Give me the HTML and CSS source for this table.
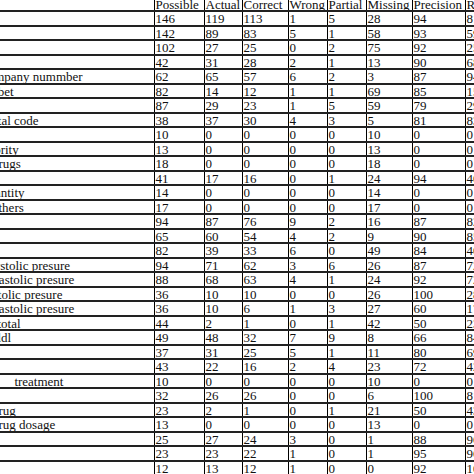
FILE: index.html
```html
<!DOCTYPE html>
<html lang="en">
<head>
<meta charset="utf-8">
<title>Extraction results</title>
<link rel="stylesheet" href="styles.css">
</head>
<body>
<table class="results">
  <colgroup>
    <col class="c-label"><col class="c-possible"><col class="c-actual"><col class="c-correct"><col class="c-wrong"><col class="c-partial"><col class="c-missing"><col class="c-precision"><col class="c-recall">
  </colgroup>
  <thead>
    <tr><th></th><th>Possible</th><th>Actual</th><th>Correct</th><th>Wrong</th><th>Partial</th><th>Missing</th><th>Precision</th><th>Recall</th></tr>
  </thead>
  <tbody>
    <tr><td>ID</td><td>146</td><td>119</td><td>113</td><td>1</td><td>5</td><td>28</td><td>94</td><td>81</td></tr>
    <tr><td>Sex</td><td>142</td><td>89</td><td>83</td><td>5</td><td>1</td><td>58</td><td>93</td><td>59</td></tr>
    <tr><td>Tel</td><td>102</td><td>27</td><td>25</td><td>0</td><td>2</td><td>75</td><td>92</td><td>25</td></tr>
    <tr><td>Fax</td><td>42</td><td>31</td><td>28</td><td>2</td><td>1</td><td>13</td><td>90</td><td>68</td></tr>
    <tr><td>Company nummber</td><td>62</td><td>65</td><td>57</td><td>6</td><td>2</td><td>3</td><td>87</td><td>94</td></tr>
    <tr><td>Diabet</td><td>82</td><td>14</td><td>12</td><td>1</td><td>1</td><td>69</td><td>85</td><td>15</td></tr>
    <tr><td>Nr</td><td>87</td><td>29</td><td>23</td><td>1</td><td>5</td><td>59</td><td>79</td><td>29</td></tr>
    <tr><td>Postal code</td><td>38</td><td>37</td><td>30</td><td>4</td><td>3</td><td>5</td><td>81</td><td>83</td></tr>
    <tr><td>Tax</td><td>10</td><td>0</td><td>0</td><td>0</td><td>0</td><td>10</td><td>0</td><td>0</td></tr>
    <tr><td>Priority</td><td>13</td><td>0</td><td>0</td><td>0</td><td>0</td><td>13</td><td>0</td><td>0</td></tr>
    <tr><td>1. drugs</td><td>18</td><td>0</td><td>0</td><td>0</td><td>0</td><td>18</td><td>0</td><td>0</td></tr>
    <tr><td>Dx</td><td>41</td><td>17</td><td>16</td><td>0</td><td>1</td><td>24</td><td>94</td><td>40</td></tr>
    <tr><td>Quantity</td><td>14</td><td>0</td><td>0</td><td>0</td><td>0</td><td>14</td><td>0</td><td>0</td></tr>
    <tr><td>Brothers</td><td>17</td><td>0</td><td>0</td><td>0</td><td>0</td><td>17</td><td>0</td><td>0</td></tr>
    <tr><td>Hb</td><td>94</td><td>87</td><td>76</td><td>9</td><td>2</td><td>16</td><td>87</td><td>82</td></tr>
    <tr><td>HR</td><td>65</td><td>60</td><td>54</td><td>4</td><td>2</td><td>9</td><td>90</td><td>85</td></tr>
    <tr><td>Wt</td><td>82</td><td>39</td><td>33</td><td>6</td><td>0</td><td>49</td><td>84</td><td>40</td></tr>
    <tr><td>1 systolic presure</td><td>94</td><td>71</td><td>62</td><td>3</td><td>6</td><td>26</td><td>87</td><td>72</td></tr>
    <tr><td>1 diastolic presure</td><td>88</td><td>68</td><td>63</td><td>4</td><td>1</td><td>24</td><td>92</td><td>72</td></tr>
    <tr><td>Systolic presure</td><td>36</td><td>10</td><td>10</td><td>0</td><td>0</td><td>26</td><td>100</td><td>28</td></tr>
    <tr><td>2 diastolic presure</td><td>36</td><td>10</td><td>6</td><td>1</td><td>3</td><td>27</td><td>60</td><td>17</td></tr>
    <tr><td>Ch total</td><td>44</td><td>2</td><td>1</td><td>0</td><td>1</td><td>42</td><td>50</td><td>23</td></tr>
    <tr><td>Ch ldl</td><td>49</td><td>48</td><td>32</td><td>7</td><td>9</td><td>8</td><td>66</td><td>84</td></tr>
    <tr><td>TG</td><td>37</td><td>31</td><td>25</td><td>5</td><td>1</td><td>11</td><td>80</td><td>69</td></tr>
    <tr><td>Glu</td><td>43</td><td>22</td><td>16</td><td>2</td><td>4</td><td>23</td><td>72</td><td>42</td></tr>
    <tr><td>No&emsp;&ensp;treatment</td><td>10</td><td>0</td><td>0</td><td>0</td><td>0</td><td>10</td><td>0</td><td>0</td></tr>
    <tr><td>Hb</td><td>32</td><td>26</td><td>26</td><td>0</td><td>0</td><td>6</td><td>100</td><td>81</td></tr>
    <tr><td>1. drug</td><td>23</td><td>2</td><td>1</td><td>0</td><td>1</td><td>21</td><td>50</td><td>43</td></tr>
    <tr><td>1. drug dosage</td><td>13</td><td>0</td><td>0</td><td>0</td><td>0</td><td>13</td><td>0</td><td>0</td></tr>
    <tr><td>Ht</td><td>25</td><td>27</td><td>24</td><td>3</td><td>0</td><td>1</td><td>88</td><td>96</td></tr>
    <tr><td>Ht</td><td>23</td><td>23</td><td>22</td><td>1</td><td>0</td><td>1</td><td>95</td><td>96</td></tr>
    <tr><td>Ht</td><td>12</td><td>13</td><td>12</td><td>1</td><td>0</td><td>0</td><td>92</td><td>100</td></tr>
  </tbody>
</table>
</body>
</html>
```
FILE: styles.css
```css
html, body {
  margin: 0;
  padding: 0;
  overflow: hidden;
  background: #fff;
}

.results {
  margin: 0 0 0 -22px;
  border-collapse: collapse;
  table-layout: fixed;
  width: 537px;
  font-family: "Liberation Serif", "Times New Roman", serif;
  font-size: 13px;
  color: #111;
}

.c-label { width: 176px; }
.c-possible { width: 50px; }
.c-actual { width: 38px; }
.c-correct { width: 46px; }
.c-wrong { width: 39px; }
.c-partial { width: 39px; }
.c-missing { width: 46px; }
.c-precision { width: 53px; }
.c-recall { width: 50px; }

.results th,
.results td {
  padding: 1px 0 0 1px;
  line-height: 11.5px;
  text-align: left;
  font-weight: normal;
  white-space: nowrap;
  overflow: hidden;
  border-bottom: 2px solid #222;
  border-left: 1px solid #000;
}

.results th {
  padding-top: 0;
  line-height: 10px;
}

.results th:first-child,
.results td:first-child {
  border-left: none;
}
```
